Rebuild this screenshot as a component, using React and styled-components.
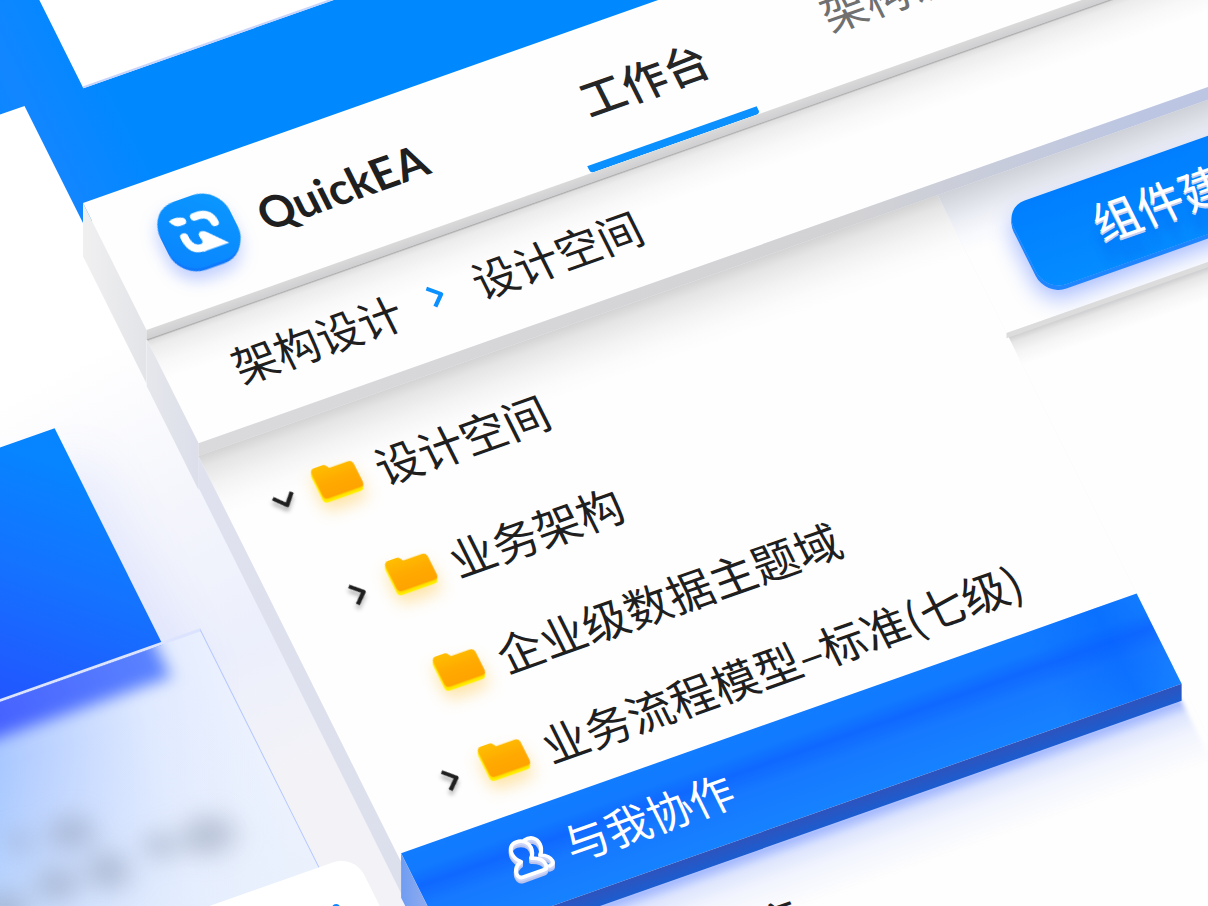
import React from "react";
import styled, { createGlobalStyle, css } from "styled-components";

const GlobalStyle = createGlobalStyle`
  * {
    box-sizing: border-box;
  }

  body {
    margin: 0;
    font-family: "Noto Sans CJK SC", "Noto Sans", sans-serif;
    color: #1f1f1f;
  }

  a {
    color: inherit;
    text-decoration: none;
  }
`;

const Page = styled.div`
  height: 100vh;
  padding: 203px 0 0 83px;
  overflow: hidden;
  background: linear-gradient(152deg, #ffffff 26%, #f5f6fc 38%, #eceffc 50%, #f3f3f7 60%);
`;

const Scene = styled.div`
  position: relative;
  width: 120vw;
  transform: rotate(-19.44deg) skewX(7.1deg);
  transform-origin: 0 0;
`;

/* side wall and front face of a raised block, both dropping straight down the screen */
const slab = css`
  position: relative;

  &::before {
    content: "";
    position: absolute;
    top: 0;
    right: 100%;
    width: ${(p) => p.$wall}px;
    height: 100%;
    background: ${(p) => p.$wallColor};
    transform: skewY(-64.5deg);
    transform-origin: 100% 0;
  }

  &::after {
    content: "";
    position: absolute;
    top: 100%;
    left: 0;
    width: 100%;
    height: ${(p) => p.$front}px;
    background: ${(p) => p.$frontColor};
    transform: skewX(-25.5deg);
    transform-origin: 0 0;
  }
`;

/* ---------- backdrop ---------- */

const BlueGround = styled.div`
  position: absolute;
  top: -500px;
  left: -400px;
  width: 1600px;
  height: 520px;
  background: linear-gradient(90deg, #0088ff 320px, #1286ff 390px, #0088ff 480px);
`;

const LeftFloor = styled.div`
  position: absolute;
  top: -111px;
  left: -500px;
  width: 491px;
  height: 190px;
  background: #ffffff;
`;

const TopCard = styled.div`
  position: absolute;
  top: -500px;
  left: 52px;
  width: 900px;
  height: 392px;
  background: #ffffff;
  border-bottom: 2px solid #c9d4fb;
`;

const BlueCard = styled.div`
  position: absolute;
  top: 203px;
  left: -527px;
  width: 400px;
  height: 260px;
  background: linear-gradient(222deg, #0784ff 8%, #1473ff 32%, #1f5cff 56%, #204eff 75%);
  box-shadow: 20px 40px 50px rgba(90, 120, 255, 0.1);
`;

const Glass = styled.div`
  position: absolute;
  top: 440px;
  left: -586px;
  width: 500px;
  height: 420px;
  overflow: hidden;
  border-top: 3px solid #dbe3ff;
  border-right: 1px solid #b3c7ff;
  background: linear-gradient(100deg, #8fbcff 36%, #b5ceff 52%, #dfe9ff 74%, #edf2fe 92%);

  &::before {
    content: "";
    position: absolute;
    top: -30px;
    left: -20px;
    width: 472px;
    height: 63px;
    background: linear-gradient(90deg, #4560ff 60%, #5b84ff);
    filter: blur(8px);
  }

  &::after {
    content: "";
    position: absolute;
    inset: 60px 0 0 0;
    background: linear-gradient(rgba(233, 241, 253, 0), rgba(233, 241, 253, 0.85) 70%);
  }
`;

const Blobs = styled.svg`
  position: absolute;
  top: 540px;
  left: -420px;
  width: 360px;
  height: 200px;
  overflow: visible;
  filter: blur(12px);
`;

const CornerCard = styled.div`
  position: absolute;
  top: 705px;
  left: -450px;
  width: 401px;
  height: 300px;
  border-radius: 22px;
  background: #ffffff;

  &::after {
    content: "";
    position: absolute;
    top: 40px;
    right: 36px;
    width: 8px;
    height: 24px;
    border-radius: 4px;
    background: #0f86ff;
  }
`;

/* ---------- board ---------- */

const Board = styled.div`
  position: relative;
`;

const Header = styled.header`
  ${slab}
  display: flex;
  align-items: center;
  height: 141px;
  padding-left: 56px;
  background: #fefefe;
`;

const Brand = styled.a`
  display: flex;
  align-items: center;
  gap: 25px;
  width: 415px;
  font-family: Lato, "Noto Sans", sans-serif;
  font-size: 45px;
  font-weight: 700;
  line-height: 56px;
`;

const LogoTile = styled.svg`
  flex: none;
  width: 72px;
  height: 80px;
  margin-bottom: 4px;
  overflow: visible;
  filter: drop-shadow(-4px 9px 8px rgba(40, 90, 255, 0.28));
`;

const Tabs = styled.nav`
  display: flex;
  gap: 76px;
  height: 100%;
`;

const Tab = styled.a`
  display: flex;
  align-items: center;
  padding: 0 24px 4px;
  font-size: 44px;
  line-height: 56px;
  font-weight: ${(p) => (p.$active ? 500 : 400)};
  color: ${(p) => (p.$active ? "#262626" : "#707070")};
  background: ${(p) =>
    p.$active ? "linear-gradient(#0a90ff, #0a90ff) bottom / 100% 8px no-repeat" : "none"};
  border-radius: 0 0 4px 4px;
`;

const Crumbs = styled.nav`
  ${slab}
  display: flex;
  align-items: center;
  gap: 27px;
  height: 115px;
  margin: 9px 0 0 -4px;
  padding: 0 0 6px 66px;
  font-size: 44px;
  line-height: 56px;
  background: linear-gradient(#9e9e9e, #dedede 2px, #ececec 8px, #f8f8f9 26px, #fefefe 44px);
`;

const Body = styled.div`
  display: flex;
  align-items: flex-start;
  margin: 12px 0 0 -10px;
`;

const Tree = styled.ul`
  ${slab}
  width: 784px;
  min-height: 760px;
  margin: 0;
  padding: 18px 0 0;
  list-style: none;
  background: linear-gradient(#d3d3d4, #e5e5e6 12px, #f3f3f4 32px, #fbfbfb 50px, #fefefe 66px);
`;

const Node = styled.li`
  height: ${(p) => (p.$roomy ? 112 : 100)}px;
`;

const nodeButton = css`
  display: flex;
  align-items: center;
  width: 100%;
  height: 100%;
  border: 0;
  font-family: inherit;
  font-size: 45px;
  line-height: 56px;
  white-space: nowrap;
  text-align: left;
`;

const NodeButton = styled.button`
  ${nodeButton}
  padding: 0 0 6px ${(p) => 46 + p.$level * 25}px;
  color: #1f1f1f;
  background: none;
`;

const Toggle = styled.span`
  display: flex;
  align-items: center;
  justify-content: center;
  width: 24px;
  height: 24px;
  margin-right: 24px;
  filter: drop-shadow(-2px 4px 2px rgba(0, 0, 0, 0.3));
`;

const FolderArt = styled.svg`
  width: 43px;
  height: 37px;
  margin: 0 18px 6px 0;
  overflow: visible;
  filter: drop-shadow(-2px 9px 8px rgba(255, 190, 40, 0.4));
`;

const SharedNode = styled.li`
  position: relative;
  height: 100px;
  margin: 0 0 42px 4px;

  /* light that the block throws on the sheet below it */
  &::before {
    content: "";
    position: absolute;
    top: 114px;
    left: -8px;
    width: 100%;
    height: 70px;
    background: linear-gradient(
      rgba(60, 105, 255, 0.55),
      rgba(110, 145, 255, 0.22) 16px,
      rgba(140, 165, 255, 0.1) 36px,
      rgba(160, 180, 255, 0)
    );
    filter: blur(2px);
  }
`;

const SharedButton = styled.button`
  ${nodeButton}
  ${slab}
  padding: 0 0 6px 92px;
  font-size: 44px;
  color: #ffffff;
  background:
    linear-gradient(90deg, rgba(0, 96, 255, 0) 660px, rgba(0, 96, 255, 0.4) 735px, rgba(0, 96, 255, 0)),
    linear-gradient(#117cff, #117aff 20%, #0f68ff 37%, #1679ff 58%, #1682ff);
`;

const PeopleArt = styled.svg`
  width: 44px;
  height: 44px;
  margin-right: 15px;
  overflow: visible;
`;

const Main = styled.main`
  flex: 1;
  height: 700px;
  background: linear-gradient(#cdcdcd, #e6e6e6 7px, #f5f5f5 18px, #fefefe 32px) 0 157px no-repeat;
`;

const Toolbar = styled.div`
  ${slab}
  height: 153px;
  padding: 34px 0 0 54px;
  background: linear-gradient(#cfd1d9, #dcdee6 14px, #ebedf4 30px, #f8f9fd 48px, #fefefe 66px);
`;

const BuildButton = styled.button`
  height: 93px;
  padding: 0 76px 4px 74px;
  border: 0;
  border-radius: 22px;
  font-family: inherit;
  font-size: 46px;
  line-height: 56px;
  color: #ffffff;
  background: linear-gradient(#007eff, #058cff);
  box-shadow:
    -1px 2px 0 #1f86ff,
    -2px 4px 0 #1f86ff,
    -6px 12px 22px rgba(40, 90, 255, 0.4);
  text-shadow:
    -1px 2px 0 #c3d0f0,
    -6px 20px 10px rgba(0, 70, 230, 0.3);
`;

/* ---------- drawings ---------- */

function Logo() {
  return (
    <LogoTile viewBox="0 0 72 80" aria-hidden="true">
      <defs>
        <linearGradient id="tile" x1="1" y1="0" x2="0" y2="1">
          <stop offset="0" stopColor="#0a98ff" />
          <stop offset="1" stopColor="#0a84ff" />
        </linearGradient>
      </defs>
      <rect x="-2" y="3" width="73" height="72" rx="27" fill="#0e78fb" />
      <rect x="-1" width="74" height="72" rx="27" fill="url(#tile)" />
      <path d="M13 17Q19 15 25 17Q29 18 29 21Q29 25 25 25H21Q15 24 13 17Z" fill="#fff" />
      <path
        d="M38 21H43Q54 22 54 33"
        fill="none"
        stroke="#fff"
        strokeWidth="8"
        strokeLinecap="round"
      />
      <path
        d="M20 37V40Q21 53 32 53"
        fill="none"
        stroke="#fff"
        strokeWidth="8"
        strokeLinecap="round"
      />
      <path
        d="M31 49.500Q36 49 34 43Q33 38 37 37Q40 37 42 39L58 57H31Z"
        fill="#fff"
      />
    </LogoTile>
  );
}

function Chevron({ color = "#1f1f1f", down }) {
  return (
    <svg width={24} height={24} viewBox="0 0 24 24" aria-hidden="true">
      <path
        d={down ? "M2 6L12 17L22 6" : "M6 2L17 12L6 22"}
        fill="none"
        stroke={color}
        strokeWidth="4"
        strokeLinejoin="round"
      />
    </svg>
  );
}

const folderPath =
  "M5 0H15Q17 0 18 2L20 5H41Q46 5 46 10V31Q46 36 41 36H5Q0 36 0 31V5Q0 0 5 0Z";

function Folder() {
  return (
    <FolderArt viewBox="0 0 46 40" aria-hidden="true">
      <defs>
        <linearGradient id="folder" x1="0" y1="0" x2="0" y2="1">
          <stop offset="0" stopColor="#ffbe00" />
          <stop offset="0.5" stopColor="#ffab00" />
          <stop offset="1" stopColor="#ffa200" />
        </linearGradient>
      </defs>
      <path d={folderPath} fill="#fff000" transform="translate(-2 4)" />
      <path d={folderPath} fill="#ffdf00" transform="translate(-1 2)" />
      <path d={folderPath} fill="url(#folder)" />
    </FolderArt>
  );
}

const frontPerson =
  "M18 3C11 3 8 8 8 13C8 18 10 21 13 24C7 26 3 30 3 35C3 39 5 40 8 40H30C33 40 35 39 35 35C35 30 30 26 24 24C27 21 29 18 29 13C29 8 25 3 18 3Z";
const backPerson =
  "M26 4C34 2 39 6 39 13C39 18 37 21 34 24C39 26 43 29 43 34C43 37 41 38 38 38";
const peoplePath = `${frontPerson} ${backPerson}`;

function People() {
  return (
    <PeopleArt viewBox="0 0 46 46" aria-hidden="true">
      <g fill="none" strokeWidth="4" strokeLinecap="round" strokeLinejoin="round">
        <path d={peoplePath} stroke="#b9c3ee" transform="translate(-2 4)" />
        <path d={peoplePath} stroke="#cdd6f8" transform="translate(-1 2)" />
        <path d={peoplePath} stroke="#ffffff" />
      </g>
    </PeopleArt>
  );
}

const nodes = [
  { label: "设计空间", level: 0, toggle: "down", roomy: true },
  { label: "业务架构", level: 1, toggle: "right", roomy: true },
  { label: "企业级数据主题域", level: 1 },
  { label: "业务流程模型–标准(七级)", level: 1, toggle: "right" },
];

function App() {
  return (
    <Page>
      <GlobalStyle />
      <Scene>
        <BlueGround />
        <LeftFloor />
        <TopCard />
        <BlueCard />
        <Glass />
        <Blobs viewBox="0 0 360 200" aria-hidden="true">
          <g fill="#8f9cb4" opacity="0.5">
            <ellipse cx="126" cy="50" rx="24" ry="17" />
            <ellipse cx="76" cy="42" rx="10" ry="12" />
            <ellipse cx="90" cy="94" rx="22" ry="17" />
            <ellipse cx="142" cy="98" rx="22" ry="20" />
            <ellipse cx="200" cy="92" rx="16" ry="14" />
            <ellipse cx="248" cy="98" rx="28" ry="20" />
            <ellipse cx="30" cy="100" rx="26" ry="18" />
          </g>
        </Blobs>
        <CornerCard />

        <Board>
          <Header
            $wall={24}
            $wallColor="linear-gradient(#f0f0f1, #e3e4e8)"
            $front={9}
            $frontColor="linear-gradient(#dadadb, #cfcfd1)"
          >
            <Brand href="#">
              <Logo />
              QuickEA
            </Brand>
            <Tabs>
              <Tab href="#" $active>
                工作台
              </Tab>
              <Tab href="#">架构设计</Tab>
            </Tabs>
          </Header>

          <Crumbs
            $wall={21}
            $wallColor="linear-gradient(#e6e7ec, #dcdfea)"
            $front={12}
            $frontColor="linear-gradient(90deg, #dadadc, #d2d2d5 700px, #bcc6e2 1000px)"
          >
            <a href="#">架构设计</a>
            <Chevron color="#0a90ff" />
            <a href="#">设计空间</a>
          </Crumbs>

          <Body>
            <Tree
              $wall={14}
              $wallColor="linear-gradient(#dfe2ee, #dcdfec 60%, #e2e3ea)"
              $front={0}
              $frontColor="none"
            >
              {nodes.map((node) => (
                <Node key={node.label} $roomy={node.roomy}>
                  <NodeButton type="button" $level={node.level}>
                    <Toggle>
                      {node.toggle && <Chevron down={node.toggle === "down"} />}
                    </Toggle>
                    <Folder />
                    {node.label}
                  </NodeButton>
                </Node>
              ))}
              <SharedNode>
                <SharedButton
                  type="button"
                  $wall={20}
                  $wallColor="linear-gradient(#6f9df2, #a9b6ea)"
                  $front={16}
                  $frontColor="linear-gradient(#2e53bd, #1b5dd0)"
                >
                  <People />
                  与我协作
                </SharedButton>
              </SharedNode>
              <Node>
                <NodeButton type="button" $level={0}>
                  <Toggle />
                  <Folder />
                  模型仓库
                </NodeButton>
              </Node>
            </Tree>

            <Main>
              <Toolbar
                $wall={0}
                $wallColor="none"
                $front={5}
                $frontColor="#dcdcdc"
              >
                <BuildButton type="button">组件建模</BuildButton>
              </Toolbar>
            </Main>
          </Body>
        </Board>
      </Scene>
    </Page>
  );
}

export default App;
